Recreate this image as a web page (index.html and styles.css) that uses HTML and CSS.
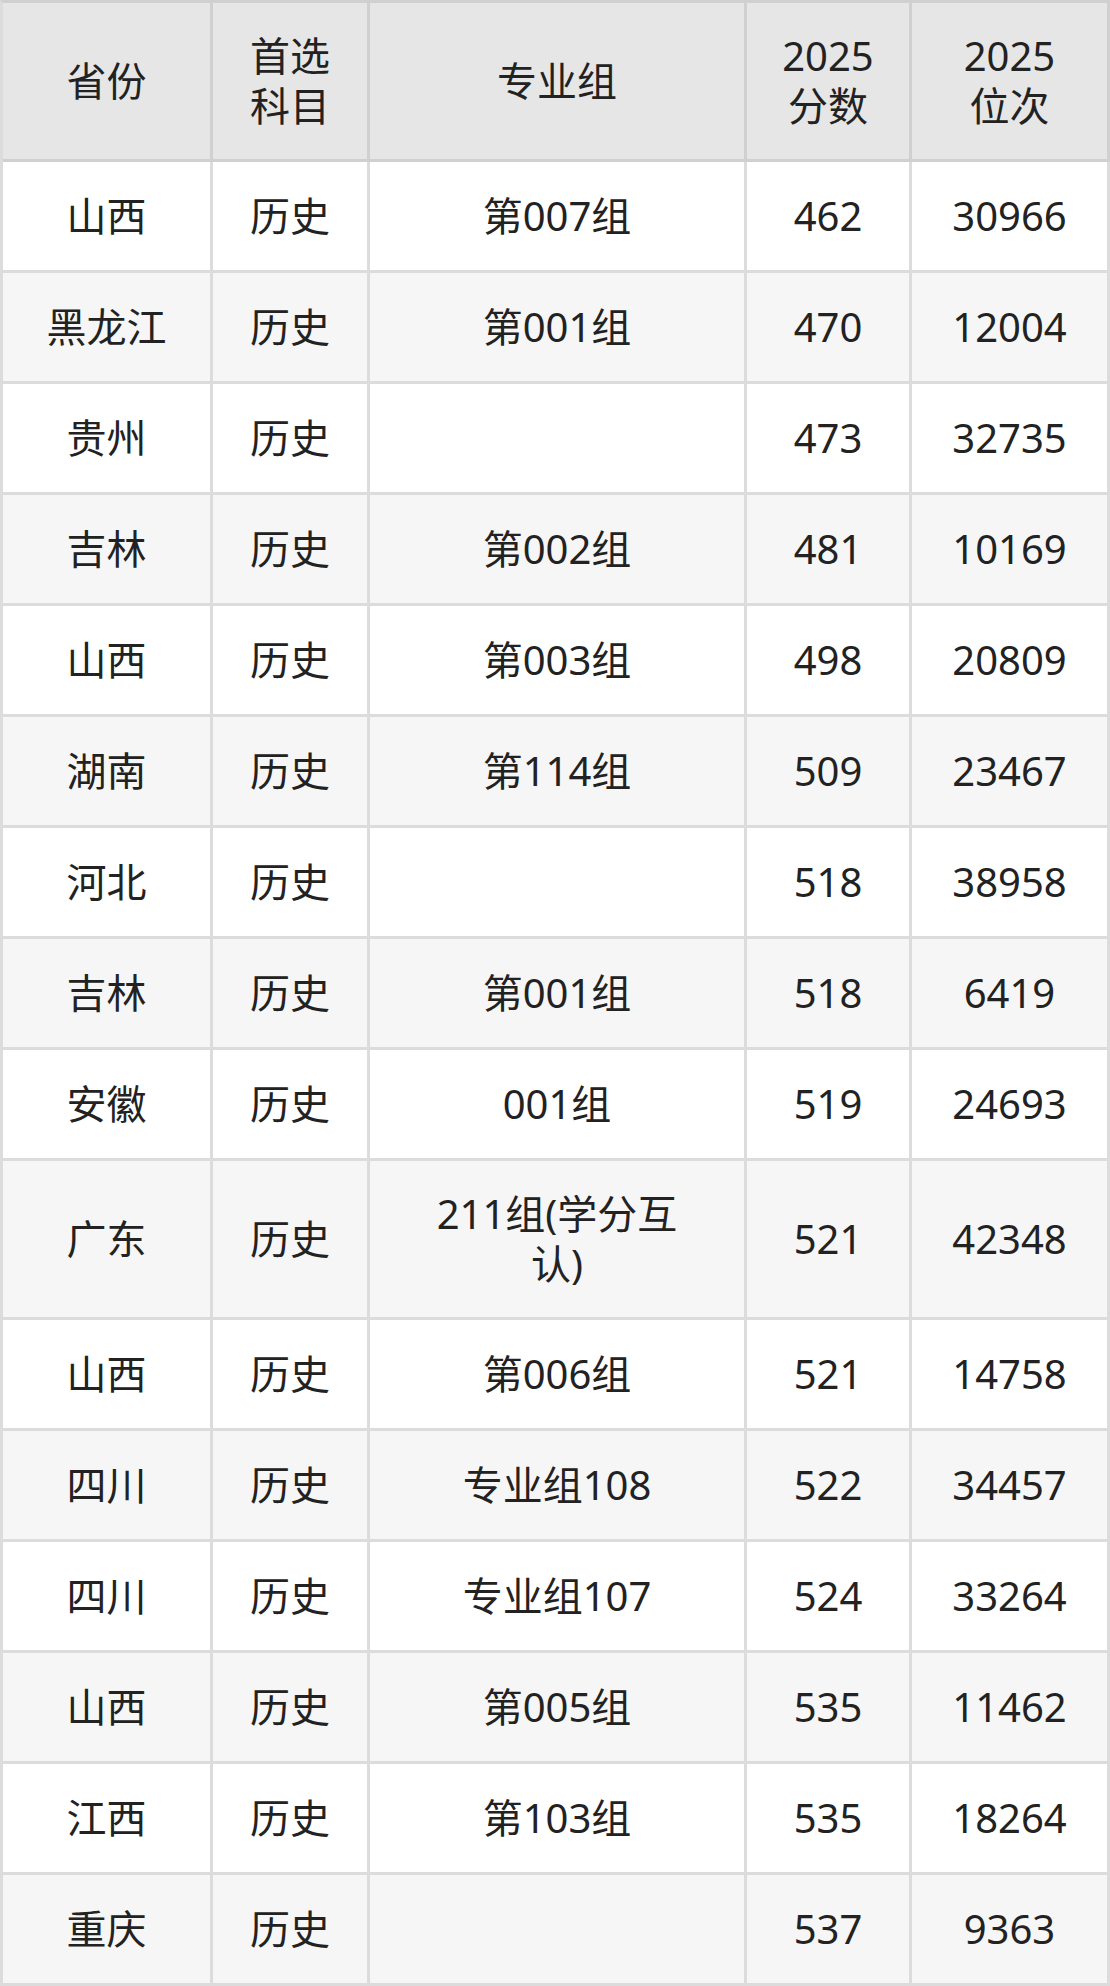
FILE: index.html
```html
<!DOCTYPE html>
<html lang="zh-CN">
<head>
<meta charset="utf-8">
<title>分数线</title>
<link rel="stylesheet" href="styles.css">
</head>
<body>
<div class="table">
  <div class="row head">
    <div class="cell">省份</div>
    <div class="cell">首选<br>科目</div>
    <div class="cell">专业组</div>
    <div class="cell">2025<br>分数</div>
    <div class="cell">2025<br>位次</div>
  </div>
  <div class="row"><div class="cell">山西</div><div class="cell">历史</div><div class="cell">第007组</div><div class="cell">462</div><div class="cell">30966</div></div>
  <div class="row alt"><div class="cell">黑龙江</div><div class="cell">历史</div><div class="cell">第001组</div><div class="cell">470</div><div class="cell">12004</div></div>
  <div class="row"><div class="cell">贵州</div><div class="cell">历史</div><div class="cell"></div><div class="cell">473</div><div class="cell">32735</div></div>
  <div class="row alt"><div class="cell">吉林</div><div class="cell">历史</div><div class="cell">第002组</div><div class="cell">481</div><div class="cell">10169</div></div>
  <div class="row"><div class="cell">山西</div><div class="cell">历史</div><div class="cell">第003组</div><div class="cell">498</div><div class="cell">20809</div></div>
  <div class="row alt"><div class="cell">湖南</div><div class="cell">历史</div><div class="cell">第114组</div><div class="cell">509</div><div class="cell">23467</div></div>
  <div class="row"><div class="cell">河北</div><div class="cell">历史</div><div class="cell"></div><div class="cell">518</div><div class="cell">38958</div></div>
  <div class="row alt"><div class="cell">吉林</div><div class="cell">历史</div><div class="cell">第001组</div><div class="cell">518</div><div class="cell">6419</div></div>
  <div class="row"><div class="cell">安徽</div><div class="cell">历史</div><div class="cell">001组</div><div class="cell">519</div><div class="cell">24693</div></div>
  <div class="row alt"><div class="cell">广东</div><div class="cell">历史</div><div class="cell">211组(学分互<br>认)</div><div class="cell">521</div><div class="cell">42348</div></div>
  <div class="row"><div class="cell">山西</div><div class="cell">历史</div><div class="cell">第006组</div><div class="cell">521</div><div class="cell">14758</div></div>
  <div class="row alt"><div class="cell">四川</div><div class="cell">历史</div><div class="cell">专业组108</div><div class="cell">522</div><div class="cell">34457</div></div>
  <div class="row"><div class="cell">四川</div><div class="cell">历史</div><div class="cell">专业组107</div><div class="cell">524</div><div class="cell">33264</div></div>
  <div class="row alt"><div class="cell">山西</div><div class="cell">历史</div><div class="cell">第005组</div><div class="cell">535</div><div class="cell">11462</div></div>
  <div class="row"><div class="cell">江西</div><div class="cell">历史</div><div class="cell">第103组</div><div class="cell">535</div><div class="cell">18264</div></div>
  <div class="row alt"><div class="cell">重庆</div><div class="cell">历史</div><div class="cell"></div><div class="cell">537</div><div class="cell">9363</div></div>
</div>
</body>
</html>
```

FILE: styles.css
```css
html, body {
  margin: 0;
  padding: 0;
  background: #ffffff;
}

body {
  font-family: "Noto Sans", "Noto Sans CJK SC", sans-serif;
  font-size: 40px;
  line-height: 50px;
  color: #222222;
}

.table {
  width: 1110px;
  box-sizing: border-box;
  border-left: 3px solid #dcdcdc;
  border-top: 3px solid #d0d0d0;
}

.row {
  display: grid;
  grid-template-columns: 210px 157px 377px 165px 198px;
  background: #ffffff;
}

.row.alt {
  background: #f6f6f6;
}

.row.head {
  background: #e6e6e6;
}

.cell {
  box-sizing: border-box;
  min-height: 111px;
  padding: 28px 10px;
  border-right: 3px solid #dcdcdc;
  border-bottom: 3px solid #dcdcdc;
  display: flex;
  align-items: center;
  justify-content: center;
  text-align: center;
}

.head .cell {
  border-color: #d0d0d0;
}
```
